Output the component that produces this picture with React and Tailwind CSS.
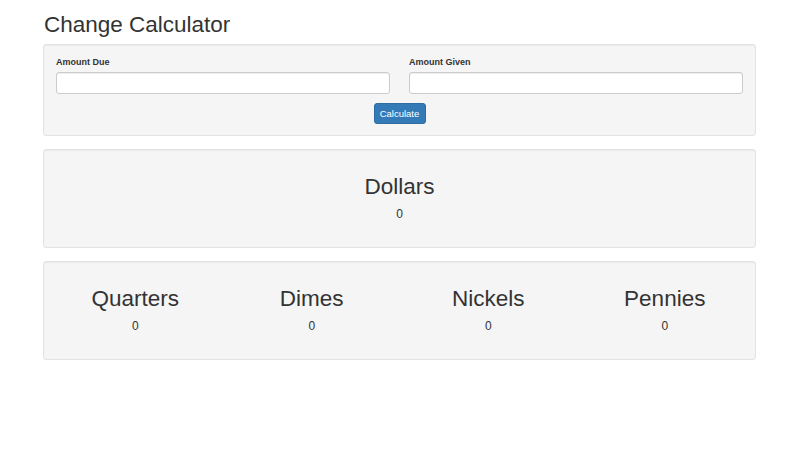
export default function App() {
  const font = { fontFamily: '"Liberation Sans", Arial, Helvetica, sans-serif' };
  const coins = ["Quarters", "Dimes", "Nickels", "Pennies"];
  return (
    <div className="min-h-[450px] bg-white text-[#333] pl-[43px] pr-[44px]" style={font}>
      <h1 className="text-[22.5px] leading-[25px] font-normal mt-[12px] mb-[7px] ml-[1px]">Change Calculator</h1>

      <div className="border border-[#e3e3e3] bg-[#f5f5f5] rounded-[3px] shadow-[inset_0_1px_1px_rgba(0,0,0,0.05)] px-[12px] pt-[11px] pb-[11px]">
        <div className="grid grid-cols-2 gap-x-[19px]">
          <div className="flex flex-col">
            <label className="text-[9px] leading-[13px] font-bold mb-[3px]">Amount Due</label>
            <input className="h-[22px] bg-white border border-[#ccc] rounded-[3px] shadow-[inset_0_1px_1px_rgba(0,0,0,0.075)] outline-none px-2 text-[10.5px]" />
          </div>
          <div className="flex flex-col">
            <label className="text-[9px] leading-[13px] font-bold mb-[3px]">Amount Given</label>
            <input className="h-[22px] bg-white border border-[#ccc] rounded-[3px] shadow-[inset_0_1px_1px_rgba(0,0,0,0.075)] outline-none px-2 text-[10.5px]" />
          </div>
        </div>
        <div className="flex justify-center mt-[9px]">
          <button className="w-[52px] h-[21px] bg-[#337ab7] border border-[#2e6da4] rounded-[3px] text-white text-[9.5px] leading-[19px]">Calculate</button>
        </div>
      </div>

      <div className="mt-[13px] border border-[#e3e3e3] bg-[#f5f5f5] rounded-[3px] shadow-[inset_0_1px_1px_rgba(0,0,0,0.05)] pt-[24px] pb-[25px] text-center">
        <h2 className="text-[22.5px] leading-[25px] font-normal">Dollars</h2>
        <p className="text-[12px] leading-[15px] mt-[8px]">0</p>
      </div>

      <div className="mt-[13px] border border-[#e3e3e3] bg-[#f5f5f5] rounded-[3px] shadow-[inset_0_1px_1px_rgba(0,0,0,0.05)] pt-[24px] pb-[25px] pl-[3px] pr-[2px] grid grid-cols-4 text-center">
        {coins.map((c) => (
          <div key={c}>
            <h2 className="text-[22.5px] leading-[25px] font-normal">{c}</h2>
            <p className="text-[12px] leading-[15px] mt-[8px]">0</p>
          </div>
        ))}
      </div>
    </div>
  );
}
